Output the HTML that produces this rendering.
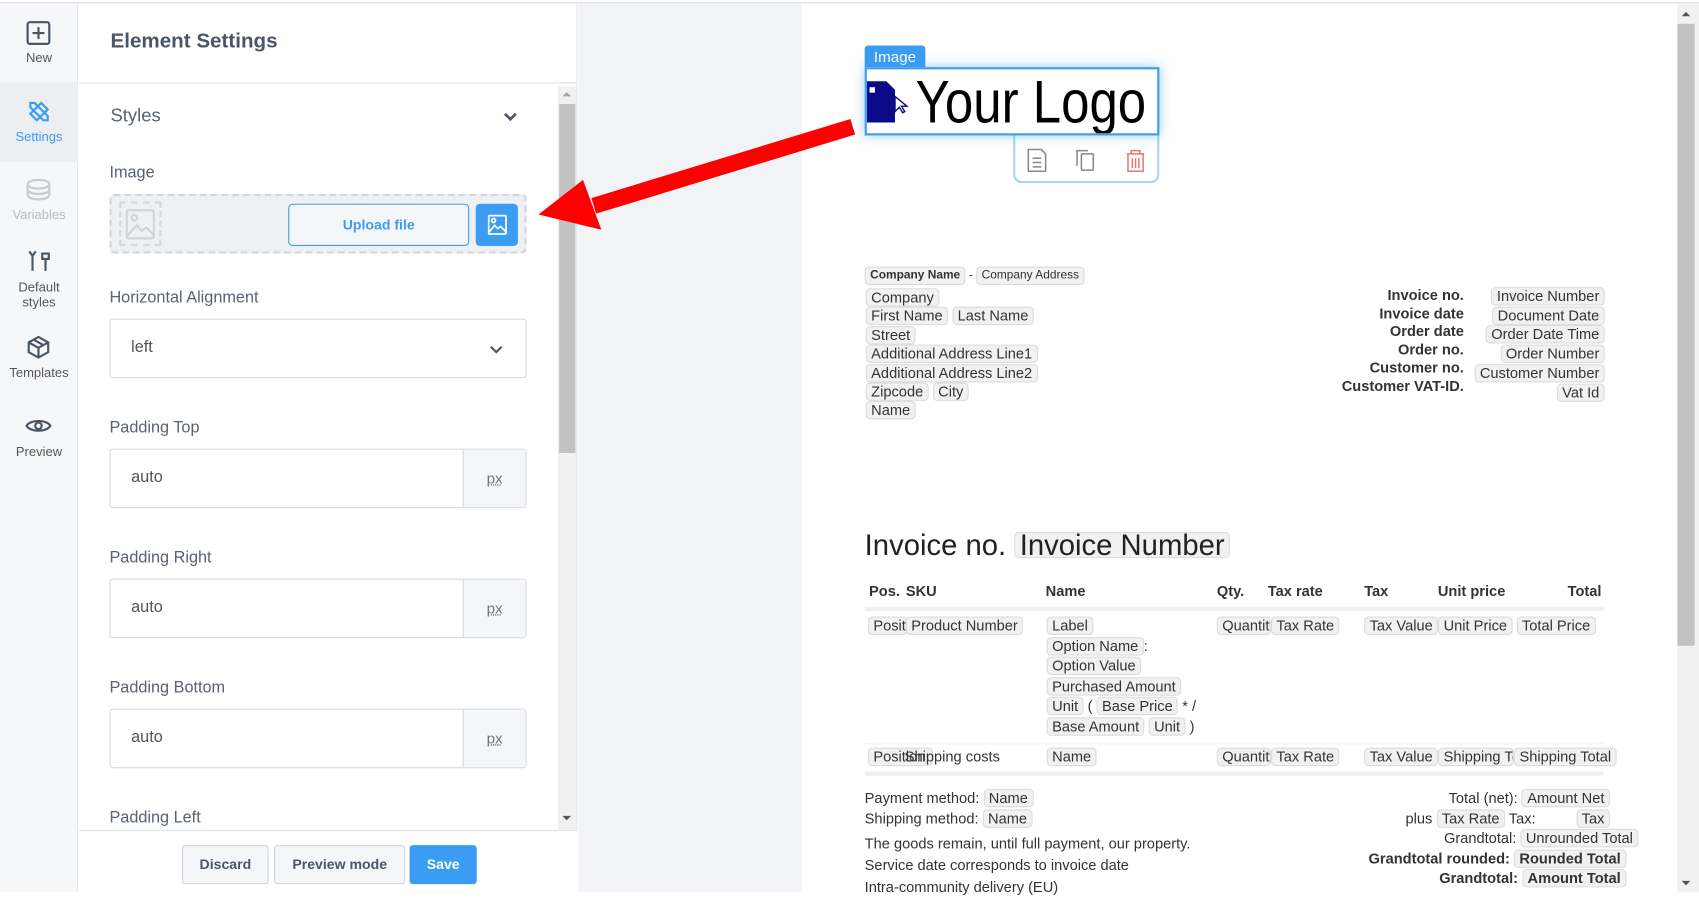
<!DOCTYPE html>
<html><head><meta charset="utf-8"><style>
*{box-sizing:border-box;margin:0;padding:0}
html,body{width:1699px;height:892px;overflow:hidden;background:#fff}
#w{position:absolute;left:0;top:0;width:1568px;height:823px;transform:scale(1.08355);transform-origin:0 0;font-family:"Liberation Sans",sans-serif;color:#4a5568}
.a{position:absolute}
.nav{position:absolute;left:0;width:72px;text-align:center;font-size:12px;color:#555}
.lbl{position:absolute;left:101px;font-size:15px;color:#5a6270}
.inp{position:absolute;left:101px;width:385px;height:55px;border:1px solid #d5d9df;border-radius:3px;background:#fff}
.inp span.v{position:absolute;left:19px;top:17px;font-size:15px;color:#555}
.px{position:absolute;right:0;top:0;width:58px;height:53px;border-left:1px solid #d5d9df;background:#f5f6f8;text-align:center;line-height:53px;font-size:14px;color:#777;text-decoration:underline dotted}
.btn{position:absolute;top:780px;height:36px;border:1px solid #cfd4da;border-radius:3px;background:#f5f6f8;font-size:13px;font-weight:bold;color:#4a5568;text-align:center;line-height:34px}
.d{font-family:"Liberation Sans Narrow","Liberation Sans",sans-serif;font-size:13.5px;color:#333;white-space:nowrap;line-height:17px}
.c{display:inline-block;background:#f1f1f1;border:1px solid #dcdcdc;border-radius:4px;padding:0 4px;line-height:15px}
.b{font-weight:bold}
.r{text-align:right}
</style></head><body><div id="w">
<div class="a" style="left:0;top:2px;width:1568px;height:1px;background:#ddd"></div>
<div class="a" style="left:0;top:3px;width:72px;height:820px;background:#f6f7f9;border-right:1px solid #e2e5ea"></div>
<div class="a" style="left:0;top:76px;width:72px;height:73px;background:#eceef1"></div>
<svg class="a" style="left:24px;top:19px" width="23" height="23" viewBox="0 0 23 23"><rect x="1.5" y="1.5" width="20" height="20" rx="2" fill="none" stroke="#4a5568" stroke-width="2"/><path d="M11.5 6v11M6 11.5h11" stroke="#4a5568" stroke-width="2"/></svg>
<div class="nav" style="top:46px">New</div>
<svg class="a" style="left:25px;top:92px" width="22" height="22" viewBox="0 0 22 22" fill="none" stroke="#3b9cf3" stroke-width="2"><path d="M3 13l10-10 6 6-10 10z"/><path d="M3 3l4 0 12 12 0 4-4 0-12-12z"/></svg>
<div class="nav" style="top:119px;color:#3b9cf3">Settings</div>
<svg class="a" style="left:24px;top:165px" width="23" height="20" viewBox="0 0 23 20" fill="none" stroke="#c8ccd2" stroke-width="2"><ellipse cx="11.5" cy="5" rx="10" ry="4"/><path d="M1.5 5v10c0 2.2 4.5 4 10 4s10-1.8 10-4V5M1.5 10c0 2.2 4.5 4 10 4s10-1.8 10-4"/></svg>
<div class="nav" style="top:191px;color:#b5bac1">Variables</div>
<svg class="a" style="left:25px;top:230px" width="22" height="22" viewBox="0 0 22 22" fill="none" stroke="#4a5568" stroke-width="2"><path d="M2 2l3 4 3-4M5 6v14M14 4h6v5h-6zM17 9v11"/></svg>
<div class="nav" style="top:258px;line-height:14px">Default<br>styles</div>
<svg class="a" style="left:24px;top:309px" width="23" height="23" viewBox="0 0 23 23" fill="none" stroke="#4a5568" stroke-width="2"><path d="M11.5 2l9 5v9l-9 5-9-5V7z M2.5 7l9 5 9-5M11.5 12v9M7 4.5l9 5"/></svg>
<div class="nav" style="top:337px">Templates</div>
<svg class="a" style="left:23px;top:385px" width="25" height="16" viewBox="0 0 25 16" fill="none" stroke="#4a5568" stroke-width="2"><path d="M1.5 8C5 2 20 2 23.5 8 20 14 5 14 1.5 8z"/><circle cx="12.5" cy="8" r="3"/></svg>
<div class="nav" style="top:410px">Preview</div>
<div class="a" style="left:73px;top:3px;width:460px;height:820px;background:#fff;border-right:1px solid #e2e5ea"></div>
<div class="a" style="left:102px;top:28px;font-size:19px;font-weight:bold;color:#4a5568">Element Settings</div>
<div class="a" style="left:73px;top:76px;width:460px;height:1px;background:#dfe3e8"></div>
<div class="a" style="left:102px;top:97px;font-size:17px;color:#5a6270">Styles</div>
<svg class="a" style="left:464px;top:103px" width="14" height="10" viewBox="0 0 14 10"><path d="M2 2l5 5 5-5" fill="none" stroke="#4a5568" stroke-width="2.5"/></svg>
<div class="lbl" style="top:151px">Image</div>
<div class="a" style="left:101px;top:179px;width:385px;height:55px;border:2px dashed #d2d6dc;border-radius:4px;background:#eef0f4"></div>
<div class="a" style="left:110px;top:186px;width:39px;height:41px;border:2px dashed #d5d8dd"></div>
<svg class="a" style="left:116px;top:193px" width="27" height="28" viewBox="0 0 27 28" fill="none" stroke="#d0d3d8" stroke-width="2"><rect x="1" y="1" width="25" height="26" rx="2"/><circle cx="8" cy="8" r="2.5"/><path d="M2 24l8-9 5 5 4-3 7 7"/></svg>
<div class="a" style="left:266px;top:188px;width:167px;height:39px;border:1px solid #3b9cf3;border-radius:4px;background:#f4f6f9;text-align:center;line-height:37px;font-size:13px;font-weight:bold;color:#3b9cf3">Upload file</div>
<div class="a" style="left:439px;top:188px;width:39px;height:39px;border-radius:4px;background:#3b9cf3"></div>
<svg class="a" style="left:450px;top:198px" width="18" height="19" viewBox="0 0 18 19" fill="none" stroke="#fff" stroke-width="1.6"><rect x="1" y="1" width="16" height="17" rx="1"/><circle cx="5.5" cy="5.5" r="1.8"/><path d="M1.5 16l5-6 3 3 2.5-2 5 5"/></svg>
<div class="lbl" style="top:266px">Horizontal Alignment</div>
<div class="inp" style="top:294px"><span class="v" style="top:17px">left</span><svg class="a" style="left:349px;top:23px" width="14" height="10" viewBox="0 0 14 10"><path d="M2 2l5 5 5-5" fill="none" stroke="#4a5568" stroke-width="2"/></svg></div>
<div class="lbl" style="top:386px">Padding Top</div>
<div class="inp" style="top:414px"><span class="v">auto</span><div class="px">px</div></div>
<div class="lbl" style="top:506px">Padding Right</div>
<div class="inp" style="top:534px"><span class="v">auto</span><div class="px">px</div></div>
<div class="lbl" style="top:626px">Padding Bottom</div>
<div class="inp" style="top:654px"><span class="v">auto</span><div class="px">px</div></div>
<div class="lbl" style="top:746px">Padding Left</div>
<div class="a" style="left:515px;top:80px;width:17px;height:686px;background:#f1f1f1"></div>
<div class="a" style="left:516px;top:96px;width:15px;height:322px;background:#c1c1c1"></div>
<svg class="a" style="left:518px;top:84px" width="10" height="6"><path d="M1 5l4-4 4 4z" fill="#a3a3a3"/></svg>
<svg class="a" style="left:518px;top:752px" width="10" height="6"><path d="M1 1l4 4 4-4z" fill="#555"/></svg>
<div class="a" style="left:73px;top:766px;width:460px;height:57px;background:#fff;border-top:1px solid #dfe3e8"></div>
<div class="btn" style="left:168px;width:80px">Discard</div>
<div class="btn" style="left:253px;width:121px">Preview mode</div>
<div class="btn" style="left:378px;width:62px;background:#3b9cf3;border-color:#3b9cf3;color:#fff">Save</div>
<div class="a" style="left:534px;top:3px;width:206px;height:820px;background:#f1f3f6"></div>
<div class="a" style="left:740px;top:3px;width:808px;height:820px;background:#fff"></div>
<div class="a" style="left:1548px;top:3px;width:20px;height:820px;background:#f1f1f1"></div>
<div class="a" style="left:1548px;top:22px;width:16px;height:574px;background:#c1c1c1"></div>
<svg class="a" style="left:1551px;top:10px" width="10" height="6"><path d="M1 5l4-4 4 4z" fill="#555"/></svg>
<svg class="a" style="left:1551px;top:812px" width="10" height="6"><path d="M1 1l4 4 4-4z" fill="#555"/></svg>
<div class="a" style="left:798px;top:42px;width:56px;height:20px;background:#3b9cf3;border-radius:3px 3px 0 0;color:#fff;font-size:14px;text-align:center;line-height:20px">Image</div>
<div class="a" style="left:935px;top:118px;width:135px;height:51px;border:2px solid #a8d2fa;border-top:none;border-radius:0 0 8px 8px;background:#fff"></div>
<div class="a" style="left:798px;top:62px;width:272px;height:63px;border:2px solid #3b9cf3;background:#fff;box-shadow:0 0 10px rgba(59,156,243,.5);overflow:hidden">
<svg class="a" style="left:0;top:10px" width="46" height="40" viewBox="0 0 46 40"><path d="M0 1h18l8 8v30H0z" fill="#0b0b8a"/><rect x="2" y="6" width="6" height="6" fill="#fff" stroke="#0b0b8a"/><path d="M26 15l0 14 4-4 3 5 2-1-3-5 5 0z" fill="#fff" stroke="#0b0b8a" stroke-width="1.3"/><path d="M20 8l5 3M20 30h6M23 27v6" stroke="#0b0b8a" stroke-width="1.5"/></svg>
<div class="a" style="left:45px;top:0;font-size:56px;line-height:60px;color:#000;white-space:nowrap;transform:scaleX(.84);transform-origin:0 0">Your Logo</div>
</div>
<svg class="a" style="left:947px;top:137px" width="110" height="22" viewBox="0 0 110 22" fill="none" stroke-width="1.4"><g stroke="#888"><path d="M2 1h12l4 4v16H2z M6 9h8M6 13h8M6 17h8"/><rect x="51" y="5" width="11" height="15" rx="1"/><path d="M47 16V2h10"/></g><g stroke="#e6766e"><path d="M93 5h16M97 5V2h8v3M94 5v16h14V5M98 9v9M101 9v9M104 9v9"/></g></svg>
<svg class="a" style="left:490px;top:100px" width="310" height="120" viewBox="490 100 310 120"><path d="M787 117L548 190" stroke="#f00" stroke-width="15"/><path d="M497 198L538 166 555 212z" fill="#f00"/></svg>
<div class="a d" style="left:798px;top:246px;font-size:11px"><span class="c b">Company Name</span> - <span class="c">Company Address</span></div>
<div class="a d" style="left:799px;top:266px;line-height:16.4px">
<span class="c">Company</span><br><span class="c">First Name</span> <span class="c">Last Name</span><br><span class="c">Street</span><br><span class="c">Additional Address Line1</span><br><span class="c">Additional Address Line2</span><br><span class="c">Zipcode</span> <span class="c">City</span><br><span class="c">Name</span></div>
<div class="a d b r" style="left:1180px;width:171px;top:265px;line-height:16.7px">Invoice no.<br>Invoice date<br>Order date<br>Order no.<br>Customer no.<br>Customer VAT-ID.</div>
<div class="a d r" style="left:1300px;width:181px;top:265px;line-height:16.7px"><span class="c">Invoice Number</span><br><span class="c">Document Date</span><br><span class="c">Order Date Time</span><br><span class="c">Order Number</span><br><span class="c">Customer Number</span><br><span class="c">Vat Id</span></div>
<div class="a d" style="left:798px;top:486px;font-size:27px;line-height:34px;color:#222">Invoice no. <span class="c" style="line-height:22px">Invoice Number</span></div>
<div class="a d b" style="left:802px;top:537px">Pos.</div>
<div class="a d b" style="left:836px;top:537px">SKU</div>
<div class="a d b" style="left:965px;top:537px">Name</div>
<div class="a d b" style="left:1123px;top:537px">Qty.</div>
<div class="a d b" style="left:1170px;top:537px">Tax rate</div>
<div class="a d b" style="left:1259px;top:537px">Tax</div>
<div class="a d b" style="left:1327px;top:537px">Unit price</div>
<div class="a d b r" style="left:1400px;width:78px;top:537px">Total</div>
<div class="a" style="left:798px;top:560px;width:682px;height:4px;background:#f0f0f0"></div>
<div class="a d" style="left:801px;top:569px"><span class="c" style="width:36px;overflow:hidden;vertical-align:top">Position</span></div>
<div class="a d" style="left:836px;top:569px"><span class="c">Product Number</span></div>
<div class="a d" style="left:966px;top:569px;line-height:18.5px"><span class="c">Label</span><br><span class="c">Option Name</span>:<br><span class="c">Option Value</span><br><span class="c">Purchased Amount</span><br><span class="c">Unit</span> ( <span class="c">Base Price</span> * /<br><span class="c">Base Amount</span> <span class="c">Unit</span> )</div>
<div class="a d" style="left:1123px;top:569px"><span class="c" style="width:50px;overflow:hidden;vertical-align:top">Quantity</span><span class="c">Tax Rate</span></div>
<div class="a d" style="left:1259px;top:569px"><span class="c">Tax Value</span><span class="c">Unit Price</span> <span class="c">Total Price</span></div>
<div class="a" style="left:798px;top:686px;width:682px;height:1px;background:#f0f0f0"></div>
<div class="a d" style="left:801px;top:690px"><span class="c" style="width:60px;overflow:hidden;vertical-align:top">Position</span></div>
<div class="a d" style="left:835px;top:690px">Shipping costs</div>
<div class="a d" style="left:966px;top:690px"><span class="c">Name</span></div>
<div class="a d" style="left:1123px;top:690px"><span class="c" style="width:50px;overflow:hidden;vertical-align:top">Quantity</span><span class="c">Tax Rate</span></div>
<div class="a d" style="left:1259px;top:690px"><span class="c">Tax Value</span><span class="c" style="width:70px;overflow:hidden;vertical-align:top">Shipping Total</span><span class="c">Shipping Total</span></div>
<div class="a" style="left:798px;top:712px;width:682px;height:4px;background:#f0f0f0"></div>
<div class="a d" style="left:798px;top:728px;line-height:18.5px">Payment method: <span class="c">Name</span><br>Shipping method: <span class="c">Name</span></div>
<div class="a d" style="left:798px;top:769px;line-height:20px">The goods remain, until full payment, our property.<br>Service date corresponds to invoice date<br>Intra-community delivery (EU)</div>
<div class="a d r" style="left:1200px;width:312px;top:728px;line-height:18.5px">Total (net): <span class="c">Amount Net</span> &nbsp;&nbsp;&nbsp;&nbsp;&nbsp;&nbsp;<br>plus <span class="c">Tax Rate</span> Tax: &nbsp;&nbsp;&nbsp;&nbsp;&nbsp;&nbsp;&nbsp;&nbsp; <span class="c">Tax</span> &nbsp;&nbsp;&nbsp;&nbsp;&nbsp;&nbsp;<br>Grandtotal: <span class="c">Unrounded Total</span><br><b>Grandtotal rounded: <span class="c">Rounded Total</span></b> &nbsp;&nbsp;<br><b>Grandtotal: <span class="c">Amount Total</span></b> &nbsp;&nbsp;</div>
</div></body></html>
